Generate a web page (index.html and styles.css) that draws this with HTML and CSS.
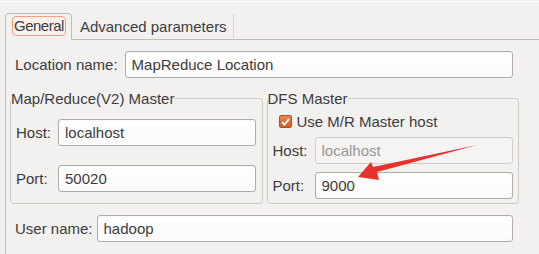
FILE: index.html
```html
<!DOCTYPE html>
<html lang="en">
<head>
  <meta charset="UTF-8" />
  <title>MapReduce Location</title>
  <link rel="stylesheet" href="styles.css">
</head>
<body>
  <div class="edge"></div>
  <div class="tabs">
    <div class="tab active"><span class="focus">General</span></div>
    <div class="tab plain"><span>Advanced parameters</span></div>
    <div class="tab-rest"></div>
  </div>

  <div class="panel">
    <div class="row">
      <label>Location name:</label>
      <input type="text" value="MapReduce Location" />
    </div>

    <div class="frames">
      <fieldset class="frame mr">
        <legend>Map/Reduce(V2) Master</legend>
        <div class="grid">
          <label>Host:</label>
          <input type="text" value="localhost" />
          <label>Port:</label>
          <input type="text" value="50020" />
        </div>
      </fieldset>

      <fieldset class="frame dfs">
        <legend>DFS Master</legend>
        <div class="check">
          <span class="box">
            <svg width="9" height="8" viewBox="0 0 9 8"><path d="M1 4.2 L3.4 6.6 L8 1.2" fill="none" stroke="#fff" stroke-width="1.8" /></svg>
          </span>
          Use M/R Master host
        </div>
        <div class="grid">
          <label>Host:</label>
          <input type="text" value="localhost" disabled />
          <label>Port:</label>
          <input type="text" value="9000" />
        </div>
      </fieldset>
    </div>

    <div class="row user">
      <label>User name:</label>
      <input type="text" value="hadoop" />
    </div>
  </div>

  <!-- red annotation arrow drawn over the dialog -->
  <svg class="arrow" width="539" height="254" viewBox="0 0 539 254">
    <polygon points="358,177 371,162 373,167 477,145 377,172 379,180" fill="#e8312a" />
  </svg>
</body>
</html>
```

FILE: styles.css
```css
body {
  margin: 0;
  width: 539px;
  height: 254px;
  overflow: hidden;
  position: relative;
  background: #f2f1f0;
  color: #3c3c3c;
  font-family: "Liberation Sans", Arial, sans-serif;
  font-size: 15px;
}

.edge {
  height: 1px;
  margin-top: 1px;
  background: #fbfbfa;
}

/* tabs */
.tabs {
  display: flex;
  margin-top: 11px;
  padding-left: 5px;
  height: 27px;
}

.tab {
  box-sizing: border-box;
  height: 27px;
  display: flex;
}

.tab.active {
  border: 1px solid #c2bdb7;
  border-bottom: none;
  border-radius: 4px 4px 0 0;
  padding: 2px 5px 0 6px;
  align-items: flex-start;
}

.focus {
  border: 1px solid #eea083;
  border-radius: 4px;
  background: #fcf1ec;
  padding: 0 1px;
  line-height: 18px;
  letter-spacing: -0.5px;
}

.tab.plain {
  border-bottom: 1px solid #c2bdb7;
  padding: 1px 0;
}

.tab.plain span {
  display: flex;
  align-items: center;
  padding: 0 6px 0 8px;
  border-right: 1px solid #d8d4cf;
}

.tab-rest {
  flex: 1;
  border-bottom: 1px solid #c2bdb7;
}

/* panel */
.panel {
  width: 509px;
  height: 203px;
  margin-left: 5px;
  border-left: 1px solid #c2bdb7;
  padding: 11px 0 0 4px;
}

.row {
  display: flex;
  align-items: center;
  gap: 7px;
  padding: 0 6px 0 5px;
}

.row input {
  flex: 1;
}

.row.user {
  gap: 4px;
}

input {
  box-sizing: border-box;
  height: 27px;
  min-width: 0;
  margin: 0;
  padding: 0 6px;
  border: 1px solid #b1aca6;
  border-radius: 3px;
  background: linear-gradient(#ffffff, #fafafa);
  box-shadow: inset 0 1px 1px #00000008;
  color: #3c3c3c;
  font: inherit;
  outline: none;
}

input:disabled {
  background: #f5f4f3;
  border-color: #d2cdc8;
  box-shadow: none;
  color: #979797;
}

/* frames */
.frames {
  display: flex;
  gap: 4px;
  margin: 12px 0 11px;
}

.frame {
  flex: 1;
  min-width: 0;
  margin: 0;
  padding: 0;
  border: 1px solid #cfcac4;
  border-radius: 4px;
}

legend {
  padding: 0;
  margin: 0;
  line-height: 17px;
}

.grid {
  display: grid;
  grid-template-columns: auto 1fr;
  column-gap: 7px;
  align-items: center;
}

.mr .grid {
  padding: 12px 6px 11px 5px;
  row-gap: 19px;
}

.dfs .check {
  display: flex;
  align-items: center;
  gap: 5px;
  height: 17px;
  margin: 6px 0 0 11px;
}

.box {
  box-sizing: border-box;
  width: 13px;
  height: 13px;
  display: flex;
  align-items: center;
  justify-content: center;
  border: 1px solid #b0501f;
  border-radius: 2px;
  background: linear-gradient(#ee8248, #d45d27);
}

.dfs .grid {
  padding: 7px 5px 0 5px;
  row-gap: 8px;
}

.arrow {
  position: absolute;
  top: 0;
  left: 0;
  pointer-events: none;
}
```
